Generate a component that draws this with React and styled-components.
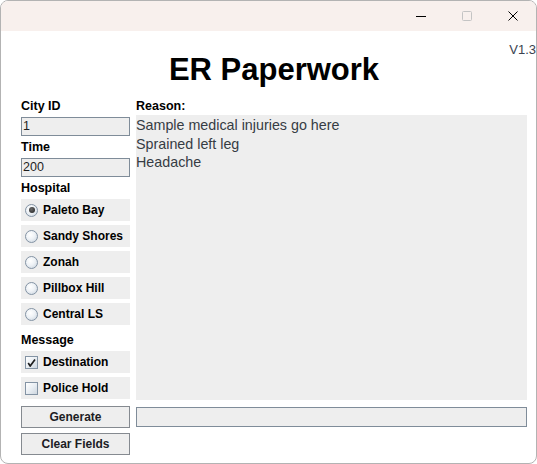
import React from 'react';
import styled, { createGlobalStyle } from 'styled-components';

const GlobalStyle = createGlobalStyle`
	html, body {
		margin: 0;
		padding: 0;
		background: #ffffff;
	}
	* {
		box-sizing: border-box;
	}
`;

const Window = styled.div`
	width: 537px;
	height: 464px;
	border: 1px solid #b3b3b3;
	border-radius: 8px;
	overflow: hidden;
	background: #ffffff;
	font-family: 'Liberation Sans', Arial, sans-serif;
	display: flex;
	flex-direction: column;
`;

const TitleBar = styled.div`
	height: 30px;
	flex: none;
	background: #f8f0ed;
	display: flex;
	justify-content: flex-end;
`;

const WinButton = styled.div`
	width: 46px;
	height: 30px;
	display: flex;
	align-items: center;
	justify-content: center;
`;

const Header = styled.div`
	height: 68px;
	flex: none;
	display: grid;
	grid-template-columns: 1fr auto 1fr;
	padding-left: 11px;
`;

const Title = styled.h1`
	grid-column: 2;
	margin: 21px 0 0;
	font-size: 31px;
	line-height: 36px;
	font-weight: bold;
	color: #000;
	white-space: nowrap;
`;

const Version = styled.div`
	grid-column: 3;
	justify-self: end;
	margin: 11px 0 0 0;
	font-size: 13px;
	line-height: 16px;
	color: #3a4250;
`;

const Main = styled.div`
	display: grid;
	grid-template-columns: 109px 1fr;
	column-gap: 6px;
	row-gap: 6px;
	padding: 0 9px 0 20px;
`;

const Column = styled.div`
	display: flex;
	flex-direction: column;
	gap: 4px;
`;

const ReasonColumn = styled.div`
	display: flex;
	flex-direction: column;
	gap: 2px;
`;

const Label = styled.div`
	font-size: 12.5px;
	line-height: 14px;
	font-weight: bold;
	color: #000;
	margin-top: ${(p) => (p.$spaced ? '4px' : '0')};
`;

const Field = styled.div`
	height: 19px;
	border: 1px solid #7f8c99;
	background: #eeeeee;
	font-size: 12.5px;
	line-height: 17px;
	padding-left: 1px;
	color: #1e1e1e;
`;

const OptionRow = styled.div`
	height: 22px;
	background: #eeeeee;
	display: flex;
	align-items: center;
	gap: 5px;
	padding-left: 4px;
	font-size: 12px;
	font-weight: bold;
	color: #000;
`;

const RadioDot = styled.span`
	width: 13px;
	height: 13px;
	border-radius: 50%;
	border: 1px solid #8393a4;
	background: radial-gradient(circle at 40% 35%, #ffffff 0%, #eef2f6 45%, #c6d0db 100%);
	display: flex;
	align-items: center;
	justify-content: center;

	&::after {
		content: '';
		width: 6px;
		height: 6px;
		border-radius: 50%;
		background: radial-gradient(circle at 40% 35%, #6a6a6a 0%, #1e1e1e 100%);
		display: ${(p) => (p.$checked ? 'block' : 'none')};
	}
`;

const CheckBox = styled.span`
	width: 13px;
	height: 13px;
	border: 1px solid #8393a4;
	background: linear-gradient(135deg, #ffffff 0%, #e9eef3 50%, #cdd6df 100%);
	display: flex;
	align-items: center;
	justify-content: center;
`;

const TextArea = styled.div`
	height: 285px;
	background: #eeeeee;
	padding: 1px 0;
	font-size: 14.3px;
	line-height: 18.5px;
	color: #363c44;
`;

const Button = styled.button`
	height: 22px;
	border: 1px solid #858a90;
	background: #eeeeee;
	font-family: 'Liberation Sans', Arial, sans-serif;
	font-size: 12px;
	font-weight: bold;
	color: #1c1c24;
	padding: 0;
	margin-top: ${(p) => (p.$tight ? '-1px' : '0')};
`;

const Progress = styled.div`
	height: 20px;
	align-self: center;
	border: 1px solid #7f8c99;
	background: #eeeeee;
`;

function Radio({ label, checked }) {
	return (
		<OptionRow>
			<RadioDot $checked={checked} />
			{label}
		</OptionRow>
	);
}

function Check({ label, checked }) {
	return (
		<OptionRow>
			<CheckBox>
				{checked && (
					<svg width='9' height='9' viewBox='0 0 9 9'>
						<path d='M1.2 5 L3.2 8 L8 1.5' fill='none' stroke='#1e1e1e' strokeWidth='1.7' />
					</svg>
				)}
			</CheckBox>
			{label}
		</OptionRow>
	);
}

const hospitals = ['Paleto Bay', 'Sandy Shores', 'Zonah', 'Pillbox Hill', 'Central LS'];

export default function App() {
	return (
		<>
			<GlobalStyle />
			<Window>
				<TitleBar>
					<WinButton>
						<svg width='10' height='10' viewBox='0 0 10 10'>
							<path d='M0 5.5 H10' stroke='#000' strokeWidth='1' />
						</svg>
					</WinButton>
					<WinButton>
						<svg width='10' height='10' viewBox='0 0 10 10'>
							<rect x='0.5' y='0.5' width='9' height='9' rx='1' fill='none' stroke='#c4c4c4' />
						</svg>
					</WinButton>
					<WinButton>
						<svg width='10' height='10' viewBox='0 0 10 10'>
							<path d='M0.5 0.5 L9.5 9.5 M9.5 0.5 L0.5 9.5' stroke='#000' strokeWidth='1' />
						</svg>
					</WinButton>
				</TitleBar>

				<Header>
					<Title>ER Paperwork</Title>
					<Version>V1.3</Version>
				</Header>

				<Main>
					<Column>
						<Label>City ID</Label>
						<Field>1</Field>
						<Label>Time</Label>
						<Field>200</Field>
						<Label>Hospital</Label>
						{hospitals.map((h, i) => (
							<Radio key={h} label={h} checked={i === 0} />
						))}
						<Label $spaced>Message</Label>
						<Check label='Destination' checked />
						<Check label='Police Hold' />
					</Column>

					<ReasonColumn>
						<Label>Reason:</Label>
						<TextArea>
							Sample medical injuries go here
							<br />
							Sprained left leg
							<br />
							Headache
						</TextArea>
					</ReasonColumn>

					<Button>Generate</Button>
					<Progress />

					<Button $tight>Clear Fields</Button>
				</Main>
			</Window>
		</>
	);
}
